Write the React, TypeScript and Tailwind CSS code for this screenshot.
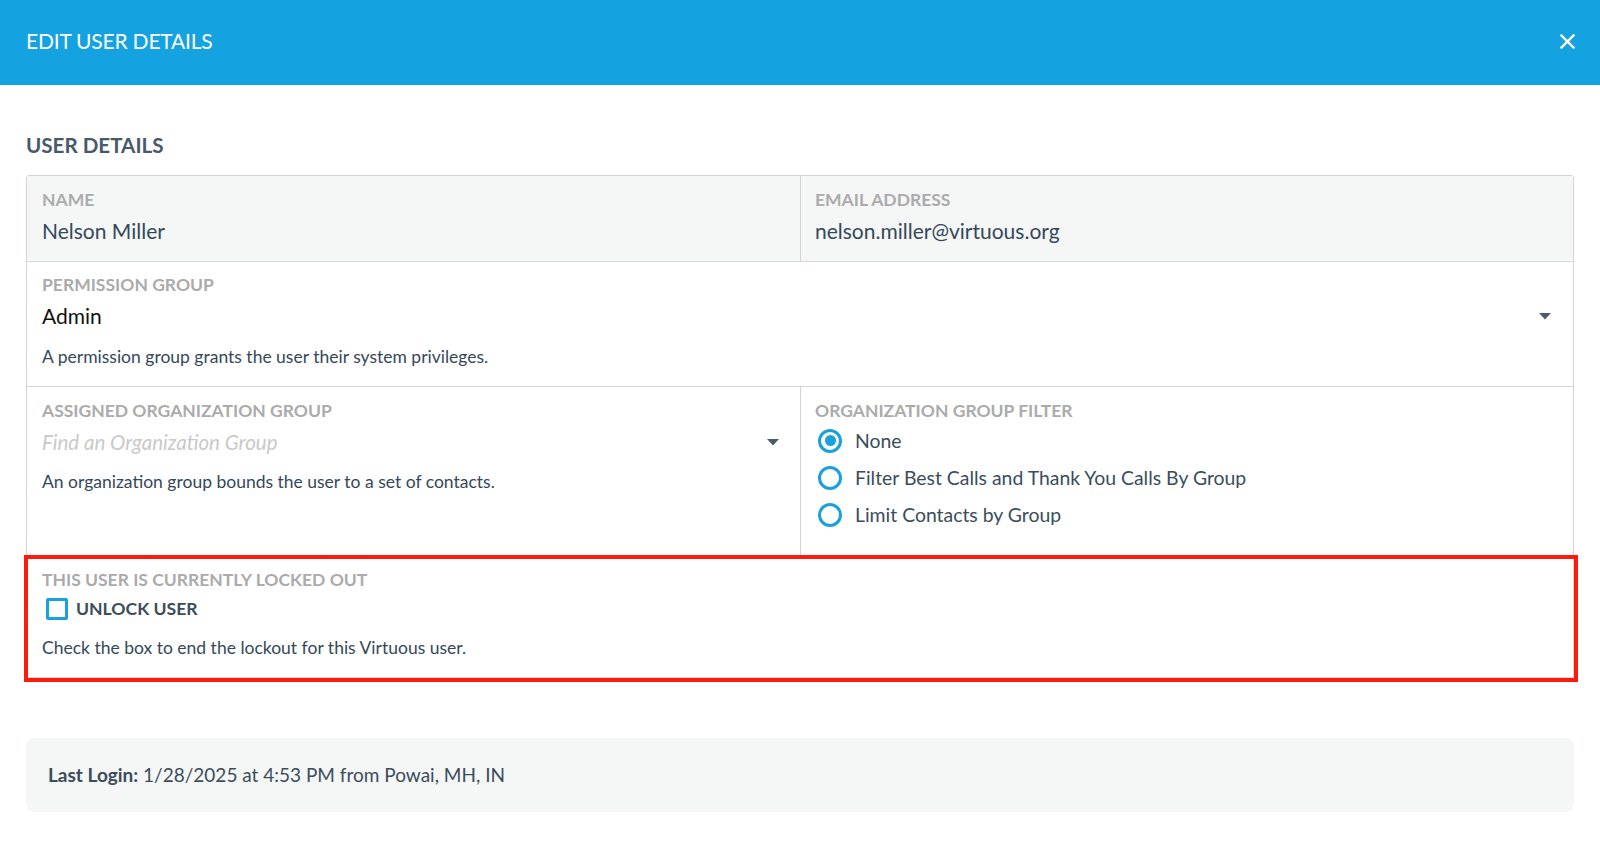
import React from "react";

const font = { fontFamily: "Lato, 'Noto Sans', sans-serif" };

function Caret() {
  return (
    <svg width="12" height="7" viewBox="0 0 12 7" className="shrink-0">
      <path d="M0 0 H12 L6 6.5 Z" fill="#4b5c69" />
    </svg>
  );
}

function Radio({ checked, label }: { checked?: boolean; label: string }) {
  return (
    <div className="flex items-center h-[37px]">
      <span className="w-[24px] h-[24px] rounded-full border-[3px] border-[#1aa0dd] flex items-center justify-center shrink-0">
        {checked && <span className="w-[11px] h-[11px] rounded-full bg-[#1aa0dd]" />}
      </span>
      <span className="ml-[13px] text-[19.4px] text-[#3b4d5a]">{label}</span>
    </div>
  );
}

export default function App() {
  return (
    <div className="w-[1600px] min-h-[843px] bg-white" style={font}>
      {/* Header */}
      <div className="h-[85px] bg-[#15a2e1] flex items-center justify-between pl-[26px] pr-[25px] pb-[2px]">
        <h1 className="text-[21px] text-white tracking-[-0.2px] mb-[2px]">EDIT USER DETAILS</h1>
        <svg width="15" height="15" viewBox="0 0 15 15">
          <path d="M1.5 1.5 L13.5 13.5 M13.5 1.5 L1.5 13.5" stroke="#fff" strokeWidth="2.4" strokeLinecap="square" />
        </svg>
      </div>

      <div className="px-[26px]">
        <h2 className="mt-[46px] text-[20.6px] leading-[28px] font-bold text-[#48596a]">USER DETAILS</h2>

        <div className="relative mt-[16px] border border-[#d3d3d3] rounded-t-[3px]">
          {/* Row 1 */}
          <div className="grid grid-cols-2 bg-[#f5f7f7] border-b border-[#d9d9d9] h-[86px]">
            <div className="px-[15px] pt-[14px]">
              <div className="text-[17.5px] leading-[20px] font-bold text-[#ababab]">NAME</div>
              <div className="mt-[8px] text-[21px] leading-[26px] text-[#34485a]">Nelson Miller</div>
            </div>
            <div className="px-[14px] pt-[14px] border-l border-[#d3d3d3]">
              <div className="text-[17.5px] leading-[20px] font-bold text-[#ababab]">EMAIL ADDRESS</div>
              <div className="mt-[8px] text-[21px] leading-[26px] text-[#34485a]">nelson.miller@virtuous.org</div>
            </div>
          </div>

          {/* Row 2 */}
          <div className="px-[15px] pt-[13px] h-[125px] border-b border-[#d3d3d3]">
            <div className="text-[17.5px] leading-[20px] font-bold text-[#ababab]">PERMISSION GROUP</div>
            <div className="mt-[8px] flex items-center justify-between">
              <span className="text-[21px] leading-[26px] text-[#111]">Admin</span>
              <span className="mr-[7px]"><Caret /></span>
            </div>
            <div className="mt-[17px] text-[17.5px] leading-[22px] text-[#34485a]">
              A permission group grants the user their system privileges.
            </div>
          </div>

          {/* Row 3 */}
          <div className="grid grid-cols-2 h-[168px]">
            <div className="px-[15px] pt-[14px]">
              <div className="text-[17.5px] leading-[20px] font-bold text-[#ababab]">ASSIGNED ORGANIZATION GROUP</div>
              <div className="mt-[8px] flex items-center justify-between">
                <span className="text-[20.5px] leading-[26px] italic text-[#c9c9c9]">Find an Organization Group</span>
                <span className="mr-[6px]"><Caret /></span>
              </div>
              <div className="mt-[16px] text-[17.5px] leading-[22px] text-[#34485a]">
                An organization group bounds the user to a set of contacts.
              </div>
            </div>
            <div className="px-[14px] pt-[14px] border-l border-[#d3d3d3]">
              <div className="text-[17.5px] leading-[20px] font-bold text-[#ababab]">ORGANIZATION GROUP FILTER</div>
              <div className="mt-[1px] pl-[3px]">
                <Radio checked label="None" />
                <Radio label="Filter Best Calls and Thank You Calls By Group" />
                <Radio label="Limit Contacts by Group" />
              </div>
            </div>
          </div>

          {/* Lockout row */}
          <div className="relative border-t border-[#d3d3d3] px-[15px] pt-[14px] h-[122px]">
            <div className="text-[17.5px] leading-[20px] font-bold text-[#ababab]">THIS USER IS CURRENTLY LOCKED OUT</div>
            <label className="mt-[7px] flex items-center">
              <span className="ml-[4px] w-[22px] h-[22px] border-[3px] border-[#1aa0dd] rounded-[2px] bg-white" />
              <span className="ml-[8px] text-[17.6px] leading-[24px] font-bold text-[#3b4d5a]">UNLOCK USER</span>
            </label>
            <div className="mt-[16px] text-[17.5px] leading-[22px] text-[#34485a]">
              Check the box to end the lockout for this Virtuous user.
            </div>
            <div className="absolute left-[-3px] right-[-5px] top-[-1px] bottom-[-5px] border-[4px] border-[#ff1a0d] pointer-events-none" />
          </div>
        </div>

        {/* Last login */}
        <div className="mt-[60px] h-[74px] rounded-[8px] bg-[#f5f7f7] flex items-center px-[22px]">
          <span className="text-[19px] text-[#3b4d5a]">
            <span className="font-bold">Last Login:</span> 1/28/2025 at 4:53 PM from Powai, MH, IN
          </span>
        </div>
      </div>
    </div>
  );
}
